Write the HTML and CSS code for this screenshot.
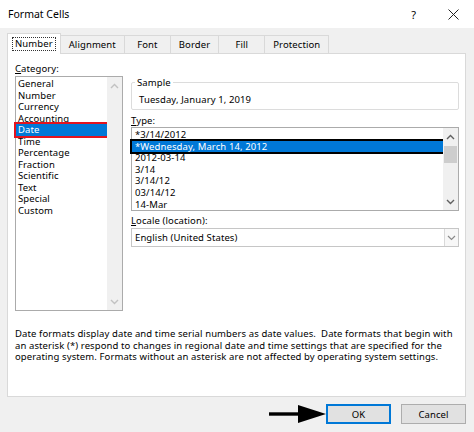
FILE: index.html
```html
<!DOCTYPE html>
<html lang="en">
<head>
  <meta charset="UTF-8">
  <title>Format Cells</title>
  <link rel="stylesheet" href="styles.css">
</head>
<body>
<div class="window">
  <div class="titlebar">
    <span class="title">Format Cells</span>
    <span class="help">?</span>
    <svg class="close" width="11" height="11" viewBox="0 0 11 11">
      <path d="M0.5 0.5 L10.5 10.5 M10.5 0.5 L0.5 10.5" stroke="#222" stroke-width="1"/>
    </svg>
  </div>

  <div class="dialog">
    <div class="tabs">
      <div class="tab active"><span class="focus">Number</span></div>
      <div class="tab">Alignment</div>
      <div class="tab">Font</div>
      <div class="tab">Border</div>
      <div class="tab">Fill</div>
      <div class="tab">Protection</div>
    </div>

    <div class="panel">
      <div class="columns">
        <div class="category">
          <div class="label"><u>C</u>ategory:</div>
          <div class="listbox category-list">
            <ul class="items">
              <li>General</li>
              <li>Number</li>
              <li>Currency</li>
              <li>Accounting</li>
              <li class="picked">Date</li>
              <li>Time</li>
              <li>Percentage</li>
              <li>Fraction</li>
              <li>Scientific</li>
              <li>Text</li>
              <li>Special</li>
              <li>Custom</li>
            </ul>
            <div class="scrollbar disabled">
              <svg class="arrow-up" width="9" height="6" viewBox="0 0 9 6"><path d="M1 5 L4.5 1.5 L8 5" fill="none" stroke="#c2c2c2" stroke-width="1.4"/></svg>
              <svg class="arrow-down" width="9" height="6" viewBox="0 0 9 6"><path d="M1 1 L4.5 4.5 L8 1" fill="none" stroke="#c2c2c2" stroke-width="1.4"/></svg>
            </div>
          </div>
        </div>

        <div class="details">
          <fieldset class="sample">
            <legend>Sample</legend>
            <div class="sample-text">Tuesday, January 1, 2019</div>
          </fieldset>

          <div class="label type-label"><u>T</u>ype:</div>
          <div class="listbox type-list">
            <ul class="items">
              <li>*3/14/2012</li>
              <li class="picked">*Wednesday, March 14, 2012</li>
              <li>2012-03-14</li>
              <li>3/14</li>
              <li>3/14/12</li>
              <li>03/14/12</li>
              <li>14-Mar</li>
            </ul>
            <div class="scrollbar">
              <svg class="arrow-up" width="9" height="6" viewBox="0 0 9 6"><path d="M1 5 L4.5 1.5 L8 5" fill="none" stroke="#606060" stroke-width="1.4"/></svg>
              <div class="thumb"></div>
              <svg class="arrow-down" width="9" height="6" viewBox="0 0 9 6"><path d="M1 1 L4.5 4.5 L8 1" fill="none" stroke="#606060" stroke-width="1.4"/></svg>
            </div>
          </div>

          <div class="label locale-label"><u>L</u>ocale (location):</div>
          <div class="combo">
            <span class="combo-value">English (United States)</span>
            <span class="drop">
              <svg width="9" height="6" viewBox="0 0 9 6"><path d="M1 1 L4.5 4.5 L8 1" fill="none" stroke="#8a8a8a" stroke-width="1.2"/></svg>
            </span>
          </div>
        </div>
      </div>

      <div class="note">
        <div class="note-line">Date formats display date and time serial numbers as date values.&nbsp; Date formats that begin with</div>
        <div class="note-line">an asterisk (*) respond to changes in regional date and time settings that are specified for the</div>
        <div class="note-line">operating system. Formats without an asterisk are not affected by operating system settings.</div>
      </div>
    </div>

    <div class="footer">
      <svg class="pointer" width="57" height="20" viewBox="0 0 57 20">
        <rect x="0" y="8.3" width="32" height="3.4" fill="#000"/>
        <polygon points="29,1 57,10 29,19" fill="#000"/>
      </svg>
      <button class="button default">OK</button>
      <button class="button">Cancel</button>
    </div>
  </div>
</div>
</body>
</html>
```

FILE: styles.css
```css
body {
  margin: 0;
  padding: 0;
  font-family: 'Noto Sans', 'Open Sans', sans-serif;
  font-size: 9.5px;
  letter-spacing: 0.1px;
  color: #000;
  background-color: #f0f0f0;
}

.window {
  width: 474px;
  height: 432px;
  overflow: hidden;
  background-color: #f0f0f0;
}

.titlebar {
  height: 28px;
  display: flex;
  align-items: center;
  background-color: #fff;
  padding-left: 8px;
}

.title {
  font-size: 10.5px;
  letter-spacing: 0;
  flex: 1;
}

.help {
  font-size: 11px;
  margin-right: 32px;
}

.close {
  margin-right: 15px;
}

.tabs {
  display: flex;
  align-items: flex-end;
  height: 20px;
  margin-top: 5px;
  margin-left: 7px;
}

.tab {
  height: 18px;
  box-sizing: border-box;
  min-width: 47px;
  padding: 0 8px;
  display: flex;
  align-items: center;
  justify-content: center;
  border: 1px solid #d9d9d9;
  border-bottom: none;
  margin-left: -1px;
  background-color: #f0f0f0;
}

.tab.active {
  height: 21px;
  margin-left: 0;
  margin-bottom: -1px;
  padding: 0 4px;
  background-color: #fff;
  position: relative;
  z-index: 1;
}

.tab .focus {
  border: 1px dotted #333;
  padding: 0 2px;
  line-height: 12px;
}

.panel {
  height: 344px;
  box-sizing: border-box;
  margin: 0 8px 0 7px;
  padding: 8px 6px 0 7px;
  border: 1px solid #d9d9d9;
  background-color: #fff;
}

.columns {
  display: flex;
  gap: 8px;
}

.category {
  width: 108px;
}

.details {
  width: 328px;
}

.label {
  height: 13px;
  line-height: 13px;
}

.listbox {
  display: flex;
  box-sizing: border-box;
  border: 1px solid #ababab;
  margin-top: 1px;
}

.category-list {
  height: 235px;
}

.items {
  flex: 1;
  list-style: none;
  margin: 0;
  padding: 1px 0 0 0;
}

.category-list li {
  height: 11.55px;
  line-height: 11.55px;
  padding-left: 2px;
  white-space: nowrap;
}

.type-list li {
  height: 11.6px;
  line-height: 11.6px;
  padding-left: 3px;
  white-space: nowrap;
}

.items li.picked {
  background-color: #0078d7;
  color: #fff;
}

.category-list li.picked {
  outline: 2px solid #e3141e;
  outline-offset: 0;
}

.type-list li.picked {
  outline: 2px solid #000;
  outline-offset: 0;
}

.scrollbar {
  width: 15px;
  display: flex;
  flex-direction: column;
  align-items: center;
  background-color: #f0f0f0;
}

.scrollbar .arrow-up {
  margin-top: 6px;
}

.scrollbar .arrow-down {
  margin-top: auto;
  margin-bottom: 5px;
}

.scrollbar .thumb {
  width: 13px;
  height: 17px;
  margin-top: 6px;
  background-color: #cdcdcd;
}

.sample {
  margin: 14px 0 0 0;
  padding: 0 7px 3px;
  border: 1px solid #dcdcdc;
  border-radius: 2px;
}

.sample legend {
  padding: 0 2px;
  margin-left: -4px;
  line-height: 13px;
}

.sample-text {
  line-height: 13px;
  margin-top: 4px;
}

.type-label {
  margin-top: 4px;
}

.type-list {
  height: 84px;
  margin-top: 0;
}

.locale-label {
  margin-top: 3px;
}

.combo {
  height: 19px;
  box-sizing: border-box;
  margin-top: 1px;
  display: flex;
  align-items: center;
  border: 1px solid #c6c6c6;
  padding-left: 3px;
}

.combo-value {
  flex: 1;
}

.drop {
  width: 14px;
  height: 17px;
  box-sizing: border-box;
  border-left: 1px solid #d9d9d9;
  display: flex;
  align-items: center;
  justify-content: center;
  background-color: #f7f7f7;
}

.note {
  margin-top: 17px;
  white-space: nowrap;
}

.note-line {
  height: 11.5px;
  line-height: 11.5px;
}

.footer {
  display: flex;
  justify-content: flex-end;
  align-items: center;
  padding-top: 7px;
  padding-right: 8px;
}

.button {
  width: 65px;
  height: 20px;
  box-sizing: border-box;
  font-family: inherit;
  font-size: 9.5px;
  letter-spacing: 0.1px;
  color: #000;
  background-color: #e1e1e1;
  border: 1px solid #adadad;
  padding: 0;
  margin-left: 10px;
}

.button.default {
  border: 2px solid #0078d7;
  margin-left: 0;
}
```
